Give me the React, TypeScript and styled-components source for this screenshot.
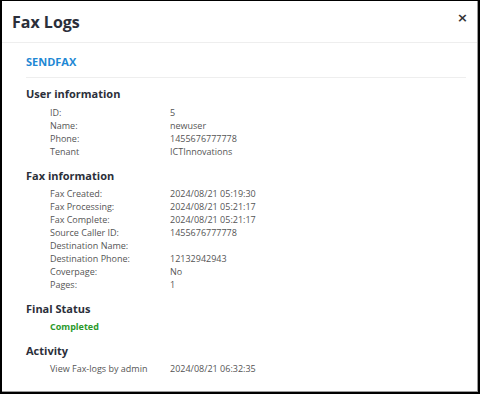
import React from 'react'
import styled, { createGlobalStyle } from 'styled-components'

const Global = createGlobalStyle`
    html, body {
        margin: 0;
        padding: 0;
        background: #000;
    }
    body {
        font-family: "Open Sans", "Liberation Sans", sans-serif;
    }
`

const Page = styled.div`
    padding: 1px 2px 2px 2px;
    height: 394px;
    box-sizing: border-box;
`

const Modal = styled.div`
    width: 476px;
    height: 391px;
    box-sizing: border-box;
    background: #fff;
    border-right: 1px solid #9a9a9a;
    border-bottom: 1px solid #9a9a9a;
    display: flex;
    flex-direction: column;
`

const Header = styled.div`
    display: flex;
    align-items: center;
    justify-content: space-between;
    height: 41px;
    padding: 0 9px 0 10px;
    border-bottom: 1px solid #eeeeee;
`

const Title = styled.h1`
    margin: 0;
    font-size: 16px;
    font-weight: 700;
    color: #2b2f3a;
`

const Close = styled.button`
    background: none;
    border: none;
    padding: 0;
    margin-top: -9px;
    font-family: "DejaVu Sans", sans-serif;
    font-size: 13px;
    font-weight: 700;
    color: #333;
    line-height: 1;
    cursor: pointer;
`

const Body = styled.div`
    padding: 8px 11px 0 24px;
`

const Tab = styled.div`
    font-size: 11px;
    font-weight: 700;
    color: #1e88d4;
    padding: 3px 0 8px 0;
    border-bottom: 1px solid #eeeeee;
`

const SectionTitle = styled.h2<{$first?: boolean}>`
    margin: ${props => props.$first ? '8px 0 4px 0' : '10px 0 3px 0'};
    font-size: 11px;
    font-weight: 700;
    color: #2b2f3a;
    line-height: 16px;
`

const Rows = styled.div`
    display: grid;
    grid-template-columns: 120px 1fr;
    padding-left: 24px;
    font-size: 9px;
    line-height: 13px;
    color: #555;
`

const Status = styled.div`
    padding-left: 24px;
    font-size: 9px;
    line-height: 13px;
    font-weight: 700;
    color: #2c9a2c;
`

type Row = [string, string]

const userRows: Row[] = [
    ['ID:', '5'],
    ['Name:', 'newuser'],
    ['Phone:', '1455676777778'],
    ['Tenant', 'ICTInnovations'],
]

const faxRows: Row[] = [
    ['Fax Created:', '2024/08/21 05:19:30'],
    ['Fax Processing:', '2024/08/21 05:21:17'],
    ['Fax Complete:', '2024/08/21 05:21:17'],
    ['Source Caller ID:', '1455676777778'],
    ['Destination Name:', ''],
    ['Destination Phone:', '12132942943'],
    ['Coverpage:', 'No'],
    ['Pages:', '1'],
]

const activityRows: Row[] = [
    ['View Fax-logs by admin', '2024/08/21 06:32:35'],
]

const InfoRows = ({rows}: {rows: Row[]}) => (
    <Rows>
        {rows.map(([label, value]) => (
            <React.Fragment key={label}>
                <span>{label}</span>
                <span>{value}</span>
            </React.Fragment>
        ))}
    </Rows>
)

const App = () => {
    return (
        <Page>
            <Global />
            <Modal>
                <Header>
                    <Title>Fax Logs</Title>
                    <Close aria-label="close">×</Close>
                </Header>
                <Body>
                    <Tab>SENDFAX</Tab>
                    <section>
                        <SectionTitle $first>User information</SectionTitle>
                        <InfoRows rows={userRows} />
                    </section>
                    <section>
                        <SectionTitle>Fax information</SectionTitle>
                        <InfoRows rows={faxRows} />
                    </section>
                    <section>
                        <SectionTitle>Final Status</SectionTitle>
                        <Status>Completed</Status>
                    </section>
                    <section>
                        <SectionTitle>Activity</SectionTitle>
                        <InfoRows rows={activityRows} />
                    </section>
                </Body>
            </Modal>
        </Page>
    )
}

export default App
